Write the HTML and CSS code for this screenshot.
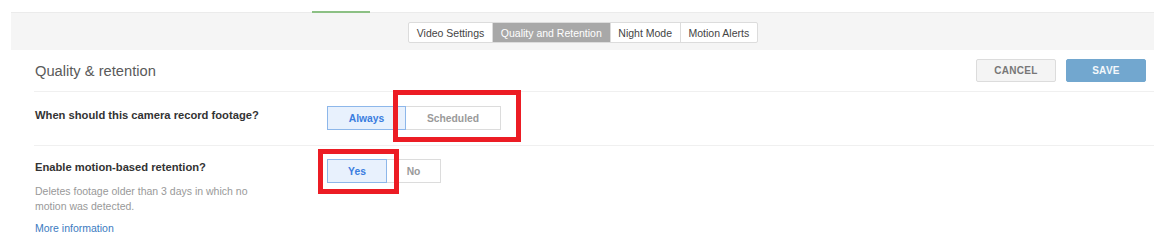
FILE: index.html
```html
<!DOCTYPE html>
<html>
<head>
<meta charset="utf-8">
<link rel="stylesheet" href="styles.css">
</head>
<body>
<div class="page">
  <div class="topstrip"><span class="indicator"></span></div>
  <div class="tabbar">
    <div class="tabs">
      <span class="tab">Video Settings</span>
      <span class="tab active">Quality and Retention</span>
      <span class="tab">Night Mode</span>
      <span class="tab">Motion Alerts</span>
    </div>
  </div>
  <div class="content">
    <div class="header">
      <h1 class="title">Quality &amp; retention</h1>
      <div class="actions">
        <button class="btn cancel">CANCEL</button>
        <button class="btn save">SAVE</button>
      </div>
    </div>
    <div class="row row1">
      <div class="label-col">
        <div class="label">When should this camera record footage?</div>
      </div>
      <div class="seg">
        <span class="opt on opt-always">Always</span>
        <span class="opt opt-sched">Scheduled</span>
      </div>
    </div>
    <div class="row row2">
      <div class="label-col">
        <div class="label">Enable motion-based retention?</div>
        <p class="desc">Deletes footage older than 3 days in which no motion was detected.</p>
        <a class="more">More information</a>
      </div>
      <div class="seg">
        <span class="opt on opt-yes">Yes</span>
        <span class="opt opt-no">No</span>
      </div>
    </div>
  </div>
  <div class="mark mark1"></div>
  <div class="mark mark2"></div>
</div>
</body>
</html>
```

FILE: styles.css
```css
* { box-sizing: border-box; }
html, body { margin: 0; padding: 0; background: #fff; }
body {
  font-family: "Liberation Sans", Arial, sans-serif;
  width: 1168px;
  height: 245px;
  overflow: hidden;
}
.page { position: relative; width: 1168px; height: 245px; }

.topstrip { height: 12px; position: relative; }
.indicator {
  position: absolute;
  left: 312px; top: 11px;
  width: 58px; height: 2px;
  background: #8cc084;
}

.tabbar {
  margin: 0 14px 0 11px;
  height: 38px;
  background: #f5f5f5;
  border-top: 1px solid #ebebeb;
  padding-top: 9px;
  display: flex;
  justify-content: center;
}
.tabs {
  display: flex;
  height: 21px;
  margin-left: 1px;
  border: 1px solid #dcdcdc;
  border-radius: 2px;
  background: #fff;
}
.tab {
  display: flex;
  align-items: center;
  padding: 0 7.75px;
  font-size: 10.5px;
  color: #444;
  border-left: 1px solid #dcdcdc;
  white-space: nowrap;
}
.tab:first-child { border-left: none; }
.tab.active { background: #a8a8a8; color: #fff; }

.content { margin: 0 14px 0 34px; }

.header {
  height: 42px;
  display: flex;
  justify-content: space-between;
  align-items: flex-start;
  border-bottom: 1px solid #f0f0f0;
  padding-right: 8px;
}
.title {
  margin: 12px 0 0 1px;
  font-size: 14.7px;
  font-weight: normal;
  color: #5a5a5a;
  line-height: 18px;
}
.actions { display: flex; gap: 10px; margin-top: 9px; }
.btn {
  font-family: "Liberation Sans", Arial, sans-serif;
  height: 23px;
  width: 80px;
  font-size: 10px;
  font-weight: bold;
  letter-spacing: 0.3px;
  border-radius: 2px;
  padding: 0;
}
.cancel { background: #f4f4f4; border: 1px solid #dcdcdc; color: #777; width: 80px; }
.save { background: #72a7cf; border: 1px solid #72a7cf; color: #f4f8fb; }

.row {
  display: flex;
  border-bottom: 1px solid #f0f0f0;
}
.row1 { height: 54px; padding-top: 14px; }
.row2 { padding-top: 13px; border-bottom: none; }
.label-col { width: 293px; padding-left: 1px; }
.label {
  font-size: 11.2px;
  font-weight: bold;
  color: #333;
  line-height: 14px;
}
.row1 .label { margin-top: 2px; }
.row2 .label { margin-top: 1px; }
.desc {
  margin: 10px 0 0 0;
  width: 240px;
  font-size: 10.5px;
  line-height: 15px;
  color: #999;
}
.more {
  display: block;
  margin-top: 8px;
  font-size: 10.5px;
  color: #3b7bbf;
  line-height: 12px;
}

.seg { display: flex; height: 24px; }
.opt {
  display: flex;
  align-items: center;
  justify-content: center;
  font-size: 10.3px;
  font-weight: bold;
  color: #9a9a9a;
  border: 1px solid #dcdcdc;
  background: #fff;
}
.opt.on {
  background: #e8f1fd;
  border-color: #8db7ea;
  color: #3a7de0;
}
.opt-always { width: 79px; }
.opt-sched { width: 95px; border-left: none; }
.opt-yes { width: 60px; }
.opt-no { width: 54px; border-left: none; }

.mark {
  position: absolute;
  border: 5px solid #ec1c24;
}
.mark1 { left: 393px; top: 90px; width: 128px; height: 52px; }
.mark2 { left: 318px; top: 149px; width: 81px; height: 45px; }
```
